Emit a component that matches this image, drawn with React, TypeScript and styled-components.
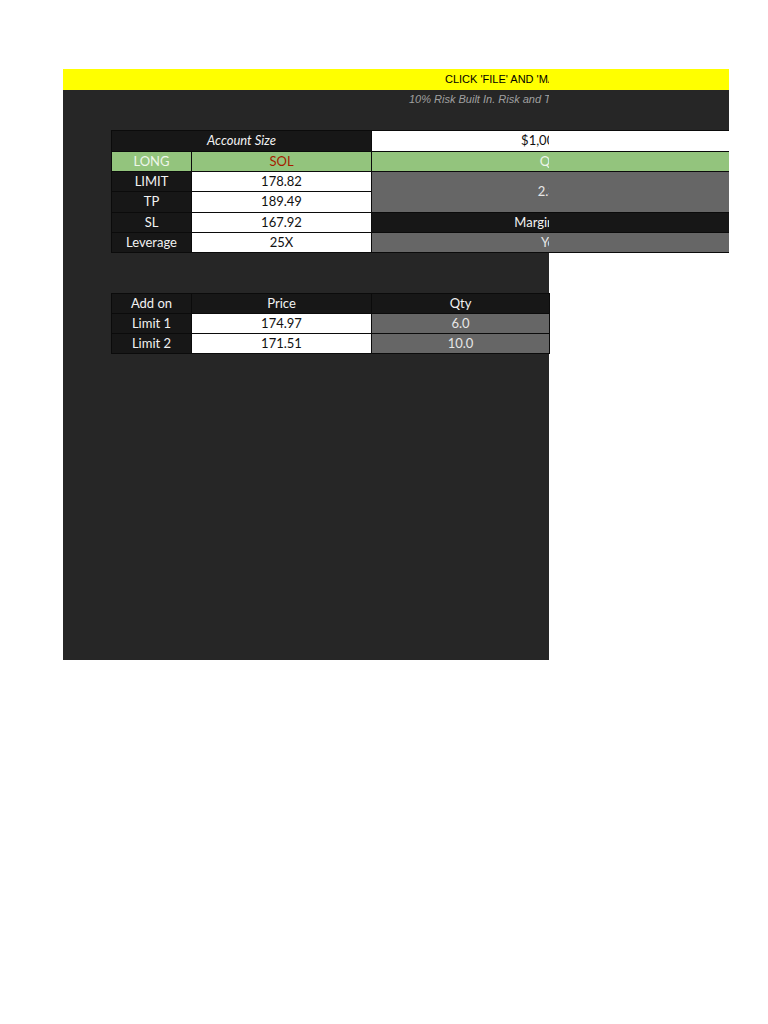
import React from "react";
import styled, { createGlobalStyle, css } from "styled-components";

const Global = createGlobalStyle`
  html, body { margin: 0; padding: 0; background: #ffffff; }
  body { font-family: "Lato", "Liberation Sans", sans-serif; }
`;

const Page = styled.div`
  padding: 69px 0 0 63px;
  width: 768px;
  height: 1024px;
  box-sizing: border-box;
`;

const Header = styled.div`
  width: 666px;
  display: flex;
  flex-direction: column;
`;

const Banner = styled.div`
  height: 21px;
  background: #ffff00;
`;

const Clip = styled.div<{ $w: number }>`
  width: ${(p) => p.$w}px;
  overflow: hidden;
  white-space: nowrap;
`;

const BannerText = styled.div`
  padding-left: 382px;
  font-family: "Liberation Sans", Arial, sans-serif;
  font-size: 11px;
  line-height: 20px;
  color: #000;
`;

const Sub = styled.div`
  height: 40px;
  background: #262626;
`;

const SubText = styled.div`
  padding-left: 346px;
  font-family: "Liberation Sans", Arial, sans-serif;
  font-style: italic;
  font-size: 11px;
  line-height: 18px;
  color: #a0a0a0;
`;

const Panel = styled.div`
  width: 486px;
  height: 530px;
  background: #262626;
  padding-left: 48px;
  box-sizing: border-box;
  display: flex;
  flex-direction: column;
  gap: 40px;
`;

const Grid = styled.div<{ $cols: string; $rows: string; $openRight?: boolean }>`
  display: grid;
  grid-template-columns: ${(p) => p.$cols};
  grid-template-rows: ${(p) => p.$rows};
  gap: 1px;
  padding: ${(p) => (p.$openRight ? "1px 0 1px 1px" : "1px")};
  background: #0b0b0b;
  width: max-content;
`;

type Tone = "black" | "white" | "green" | "gray";

const tones: Record<Tone, ReturnType<typeof css>> = {
  black: css`background: #171717; color: #f2f2f2;`,
  white: css`background: #ffffff; color: #111111;`,
  green: css`background: #93c47d; color: #eef6ea;`,
  gray: css`background: #666666; color: #e6e6e6;`,
};

const Cell = styled.div<{ $tone: Tone; $span?: number; $rspan?: number; $italic?: boolean; $red?: boolean }>`
  ${(p) => tones[p.$tone]};
  ${(p) => p.$red && css`color: #a61c00;`}
  ${(p) => p.$span && css`grid-column: span ${p.$span};`}
  ${(p) => p.$rspan && css`grid-row: span ${p.$rspan};`}
  font-style: ${(p) => (p.$italic ? "italic" : "normal")};
  font-size: 13px;
  line-height: 16px;
  padding-bottom: 2px;
  box-sizing: border-box;
  display: flex;
  align-items: center;
  justify-content: center;
  overflow: hidden;
  white-space: nowrap;
`;

const WideCell = styled(Cell)`
  justify-content: flex-start;
`;

const WideInner = styled.div`
  width: 357px;
  text-align: center;
`;

const Wide: React.FC<{ tone: Tone; rspan?: number; children: React.ReactNode }> = ({ tone, rspan, children }) => (
  <WideCell $tone={tone} $rspan={rspan}>
    <Clip $w={177}>
      <WideInner>{children}</WideInner>
    </Clip>
  </WideCell>
);

export default function App() {
  return (
    <>
      <Global />
      <Page>
        <Header>
          <Banner>
            <Clip $w={486}>
              <BannerText>CLICK 'FILE' AND 'MAKE A COPY' TO EDIT</BannerText>
            </Clip>
          </Banner>
          <Sub>
            <Clip $w={486}>
              <SubText>10% Risk Built In. Risk and Target Adjustable</SubText>
            </Clip>
          </Sub>
        </Header>
        <Panel>
          <Grid $cols="79px 179px 357px" $rows="20px 19px 19px 20px 19px 19px" $openRight>
            <Cell $tone="black" $span={2} $italic>Account Size</Cell>
            <Wide tone="white">$1,000.00</Wide>
            <Cell $tone="green">LONG</Cell>
            <Cell $tone="green" $red>SOL</Cell>
            <Wide tone="green">Qty</Wide>
            <Cell $tone="black">LIMIT</Cell>
            <Cell $tone="white">178.82</Cell>
            <Wide tone="gray" rspan={2}>2.35</Wide>
            <Cell $tone="black">TP</Cell>
            <Cell $tone="white">189.49</Cell>
            <Cell $tone="black">SL</Cell>
            <Cell $tone="white">167.92</Cell>
            <Wide tone="black">Margin Used</Wide>
            <Cell $tone="black">Leverage</Cell>
            <Cell $tone="white">25X</Cell>
            <Wide tone="gray">Yes</Wide>
          </Grid>
          <Grid $cols="79px 179px 177px" $rows="19px 19px 19px">
            <Cell $tone="black">Add on</Cell>
            <Cell $tone="black">Price</Cell>
            <Cell $tone="black">Qty</Cell>
            <Cell $tone="black">Limit 1</Cell>
            <Cell $tone="white">174.97</Cell>
            <Cell $tone="gray">6.0</Cell>
            <Cell $tone="black">Limit 2</Cell>
            <Cell $tone="white">171.51</Cell>
            <Cell $tone="gray">10.0</Cell>
          </Grid>
        </Panel>
      </Page>
    </>
  );
}
